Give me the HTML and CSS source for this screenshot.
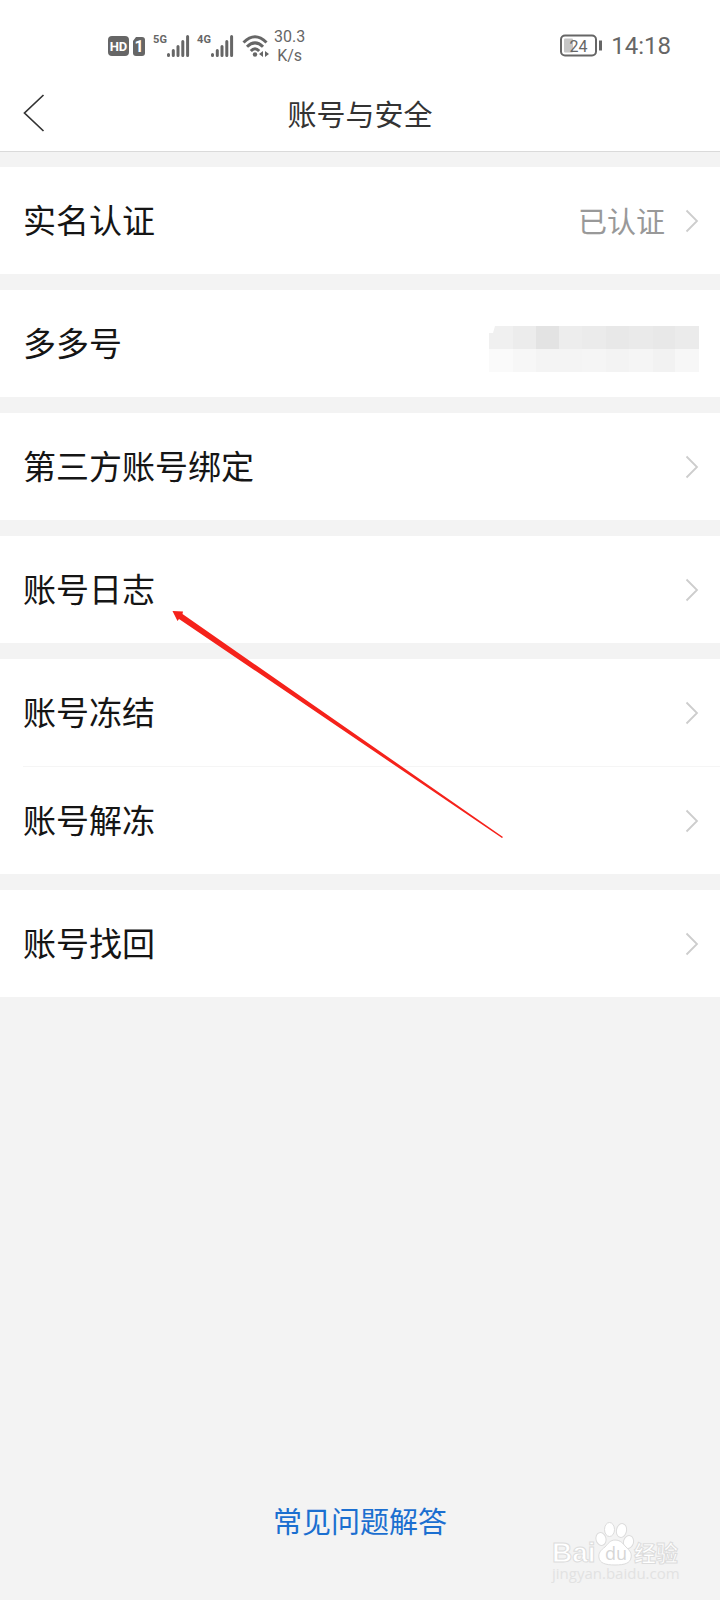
FILE: index.html
```html
<!DOCTYPE html>
<html lang="zh-CN">
<head>
<meta charset="utf-8">
<meta name="viewport" content="width=device-width, initial-scale=1">
<title>账号与安全</title>
<link rel="stylesheet" href="styles.css">
</head>
<body>
<svg class="defs" aria-hidden="true">
  <symbol id="chevron" viewBox="0 0 14 24"><path d="M1.5 1.5 12 12 1.5 22.5" fill="none" stroke="#cdcdcd" stroke-width="1.8"/></symbol>
  <symbol id="signal" viewBox="0 0 24 24"><path d="M2.5 20.500v1M7.300 16.500v5M12 12.500v9M16.800 7.500v14M21.600 2.500v19" fill="none" stroke="#666" stroke-width="3" stroke-linecap="round"/></symbol>
</svg>
<div class="screen">
  <div class="status">
    <div class="status-side">
      <svg class="sim" viewBox="0 0 38 22" aria-hidden="true">
        <rect x="0" y="1" width="21" height="20" rx="4" fill="#666"/>
        <text x="10.500" y="16" class="sim-text sim-hd">HD</text>
        <path d="M28 2h6a3 3 0 0 1 3 3v13a3 3 0 0 1-3 3h-6a3 3 0 0 1-3-3V6z" fill="#666"/>
        <text x="31" y="17" class="sim-text sim-num">1</text>
      </svg>
      <div class="network"><span class="gen">5G</span><svg class="bars" aria-hidden="true"><use href="#signal"/></svg></div>
      <div class="network"><span class="gen">4G</span><svg class="bars" aria-hidden="true"><use href="#signal"/></svg></div>
      <svg class="wifi" viewBox="0 0 28 24" aria-hidden="true">
        <g fill="none" stroke="#666" stroke-width="3">
          <path d="M1.500 8.500Q13 -3 24.500 8.500"/>
          <path d="M5 12.800Q13 5 21 12.800"/>
          <path d="M8.800 17Q13 12.500 17.200 17"/>
        </g>
        <circle cx="13" cy="20.500" r="2.200" fill="#666"/>
        <path d="M21 17v6l-4-3zM23 17v6l4-3z" fill="#666"/>
      </svg>
      <div class="speed"><span>30.3</span><span>K/s</span></div>
    </div>
    <div class="status-side">
      <svg class="battery" viewBox="0 0 43 24" aria-hidden="true">
        <rect x="1" y="1.500" width="35" height="20" rx="4" fill="none" stroke="#666" stroke-width="2"/>
        <rect x="4" y="4.500" width="9" height="14" rx="1" fill="#c6c6c6"/>
        <path d="M40.500 6.500v10" stroke="#666" stroke-width="3"/>
        <text x="18.500" y="18" class="battery-text">24</text>
      </svg>
      <span class="clock">14:18</span>
    </div>
  </div>
  <header class="header">
    <button class="back" type="button" aria-label="返回">
      <svg class="back-icon" viewBox="0 0 22 40" aria-hidden="true"><path d="M20.500 2 1.500 20l19 18" fill="none" stroke="#333" stroke-width="1.700"/></svg>
    </button>
    <h1 class="title">账号与安全</h1>
  </header>
  <main class="main">
    <section class="group">
      <button class="row" type="button"><span class="label">实名认证</span><span class="value">已认证</span><svg class="chevron" aria-hidden="true"><use href="#chevron"/></svg></button>
    </section>
    <section class="group">
      <div class="row"><span class="label">多多号</span>
        <svg class="mosaic" viewBox="0 0 210 46" aria-hidden="true">
          <path d="M6 0H24V23H0V7H4z" fill="#f0f0f0"/>
          <path d="M24 0h23v23H24z" fill="#ececec"/>
          <path d="M47 0h23v23H47z" fill="#e3e3e3"/>
          <path d="M70 0h23v23H70z" fill="#ededed"/>
          <path d="M93 0h24v23H93z" fill="#ebebeb"/>
          <path d="M117 0h23v23h-23z" fill="#e8e8e8"/>
          <path d="M140 0h24v23h-24z" fill="#eaeaea"/>
          <path d="M164 0h22v23h-22z" fill="#e8e8e8"/>
          <path d="M186 0h24v23h-24z" fill="#ebebeb"/>
          <path d="M0 23h24v23H0z" fill="#fafafa"/>
          <path d="M24 23h23v23H24z" fill="#f7f7f7"/>
          <path d="M47 23h46v23H47z" fill="#f4f4f4"/>
          <path d="M93 23h24v23H93z" fill="#f5f5f5"/>
          <path d="M117 23h23v23h-23z" fill="#f3f3f3"/>
          <path d="M140 23h24v23h-24z" fill="#f5f5f5"/>
          <path d="M164 23h22v23h-22z" fill="#f2f2f2"/>
          <path d="M186 23h24v23h-24z" fill="#f7f7f7"/>
        </svg>
      </div>
    </section>
    <section class="group">
      <button class="row" type="button"><span class="label">第三方账号绑定</span><svg class="chevron" aria-hidden="true"><use href="#chevron"/></svg></button>
    </section>
    <section class="group">
      <button class="row" type="button"><span class="label">账号日志</span><svg class="chevron" aria-hidden="true"><use href="#chevron"/></svg></button>
      <svg class="arrow" viewBox="0 0 332 230" aria-hidden="true"><path d="M.5 1 11 1.500 10.500 4 331 227 330 228 7 9 5.500 11z" fill="#f5221b"/></svg>
    </section>
    <section class="group">
      <button class="row" type="button"><span class="label">账号冻结</span><svg class="chevron" aria-hidden="true"><use href="#chevron"/></svg></button>
      <hr class="divider">
      <button class="row" type="button"><span class="label">账号解冻</span><svg class="chevron" aria-hidden="true"><use href="#chevron"/></svg></button>
    </section>
    <section class="group">
      <button class="row" type="button"><span class="label">账号找回</span><svg class="chevron" aria-hidden="true"><use href="#chevron"/></svg></button>
    </section>
  </main>
  <footer class="footer"><a class="faq" href="#">常见问题解答</a></footer>
  <svg class="watermark" viewBox="0 0 134 66" role="img" aria-label="Baidu 经验">
    <g fill="#fff" stroke="#dcdcdc" stroke-width="1">
      <text x="1" y="41" class="mark-latin">Bai</text>
      <ellipse cx="50" cy="18" rx="5" ry="6.500" transform="rotate(-15 50 18)"/>
      <ellipse cx="58.500" cy="8.500" rx="5" ry="7"/>
      <ellipse cx="70.500" cy="9.500" rx="5" ry="7" transform="rotate(12 70.500 9.500)"/>
      <ellipse cx="77.500" cy="21" rx="5" ry="6.500" transform="rotate(15 77.500 21)"/>
      <path d="M64 19c6 0 8 4 11 7 4 4 6 6 5 11-1 5-6 7-16 7s-15-2-16-7c-1-5 2-8 6-11 3-3 5-7 10-7z"/>
      <text x="83" y="40" class="mark-cjk">经验</text>
    </g>
    <text x="1" y="58" class="mark-url">jingyan.baidu.com</text>
    <text x="54" y="39" class="mark-du">du</text>
  </svg>
</div>
</body>
</html>
```
FILE: styles.css
```css
* { box-sizing: border-box; }
body {
  margin: 0;
  background: #f3f3f3;
  color: #151515;
  font-family: "Noto Sans CJK SC", "Noto Sans", sans-serif;
}
button { border: 0; padding: 0; background: none; color: inherit; font: inherit; text-align: left; }
.defs { display: none; }
.screen { position: relative; display: flex; flex-direction: column; min-height: 100vh; }

.status {
  display: flex;
  justify-content: space-between;
  align-items: center;
  height: 76px;
  padding: 16px 49px 0 108px;
  background: #fff;
  color: #666;
  font-family: Roboto, sans-serif;
}
.status-side { display: flex; align-items: center; gap: 8px; }
.sim { width: 38px; height: 22px; }
.sim-text { fill: #fff; font-weight: 700; text-anchor: middle; }
.sim-hd { font-size: 13px; }
.sim-num { font-size: 16px; }
.network { display: flex; align-items: flex-start; }
.gen { display: flex; justify-content: center; width: 12px; font: 700 11px/12px Roboto, sans-serif; }
.bars { width: 24px; height: 24px; }
.wifi { width: 28px; height: 24px; }
.speed { display: flex; flex-direction: column; align-items: center; margin-left: -4px; font-size: 16px; line-height: 19px; }
.battery { width: 43px; height: 24px; }
.battery-text { fill: #666; font-size: 16px; text-anchor: middle; }
.clock { font-size: 24px; line-height: 28px; }

.header {
  display: grid;
  grid-template-columns: 80px 1fr 80px;
  align-items: center;
  height: 76px;
  background: #fff;
  border-bottom: 1px solid #dadada;
}
.back { display: flex; padding-left: 23px; padding-bottom: 2px; }
.back-icon { width: 22px; height: 40px; }
.title { margin: 0; padding-bottom: 2px; color: #333; font-size: 29px; line-height: 40px; font-weight: 400; text-align: center; }

.main { display: flex; flex-direction: column; gap: 16px; padding-top: 15px; }
.group { position: relative; background: #fff; }
.row { display: flex; align-items: center; width: 100%; height: 107px; padding: 0 21px 0 23px; }
.label { flex: 1; padding-bottom: 4px; font-size: 33px; line-height: 48px; }
.value { margin-right: 20px; padding-bottom: 2px; color: #999; font-size: 29px; line-height: 40px; }
.chevron { width: 14px; height: 24px; }
.mosaic { width: 210px; height: 46px; margin-top: 10px; }
.divider { height: 1px; margin: 0 0 0 23px; border: 0; background: #f5f5f5; }
.arrow { position: absolute; left: 172px; top: 74px; z-index: 1; width: 332px; height: 230px; pointer-events: none; }

.footer { margin-top: auto; padding-bottom: 60px; text-align: center; }
.faq { color: #1b6fd0; font-size: 29px; line-height: 40px; text-decoration: none; }

.watermark { position: absolute; right: 35px; bottom: 13px; width: 134px; height: 66px; }
.mark-latin { font: 700 28px "Liberation Sans", sans-serif; }
.mark-cjk { font: 700 22px "Noto Sans CJK SC", sans-serif; }
.mark-url { fill: #e2e2e2; font: 400 15px "Open Sans", sans-serif; }
.mark-du { fill: #d6d6d6; font: 400 18px "Open Sans", sans-serif; }
```
